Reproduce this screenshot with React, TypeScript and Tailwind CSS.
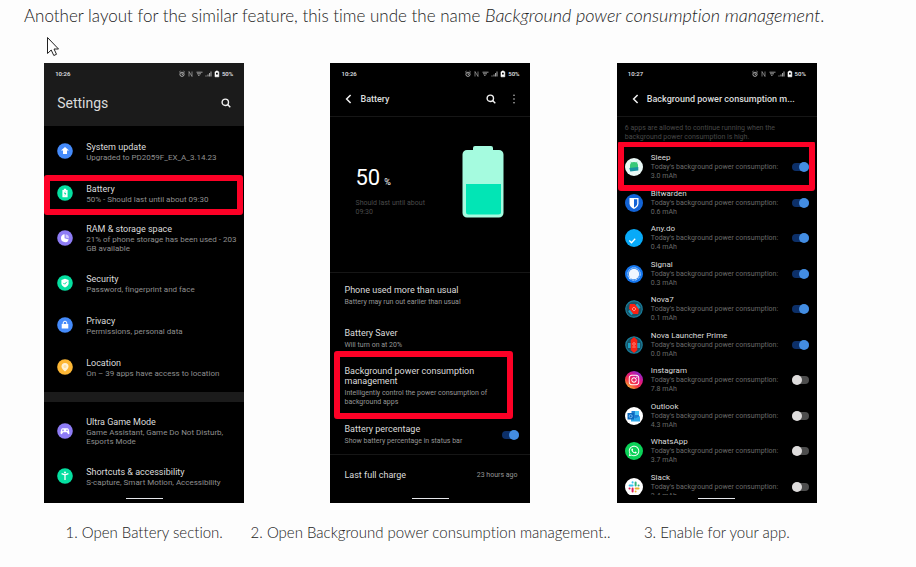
import { ReactNode } from "react";
import { FaInstagram, FaWhatsapp } from "react-icons/fa";

function StatusBar({ time }: { time: string }) {
  return (
    <div className="flex h-[22px] shrink-0 items-center justify-between px-[11px] text-[6px] font-medium text-gray-200">
      <span>{time}</span>
      <span className="flex items-center">
        <svg width="44" height="8" viewBox="0 0 44 8" fill="none" stroke="#cfcfcf">
          {/* alarm */}
          <circle cx="4" cy="4.3" r="2.1" strokeWidth="0.8" />
          <path d="M1.2 2.2l1.3-1.1M6.8 2.2L5.5 1.1M4 3v1.4h1" strokeWidth="0.7" />
          {/* nfc */}
          <path d="M11 6.5v-5l3 5v-5" strokeWidth="0.7" opacity="0.8" />
          {/* wifi */}
          <path d="M18.5 2.2h6M19 3.8h4M20 5.3h1.6" strokeWidth="0.9" opacity="0.8" />
          {/* signal */}
          <path d="M28 6.5v-1M30 6.5v-2M31.6 6.5V3M33 6.5v-5" strokeWidth="1" opacity="0.85" />
          {/* battery */}
          <path d="M37 1.8h1v-0.8h1.8v0.8h1v5h-3.8z" fill="#fff" stroke="#fff" strokeWidth="0.6" />
          <path d="M38 3.6h1.8" stroke="#111" strokeWidth="1.6" />
        </svg>
        <span>50%</span>
      </span>
    </div>
  );
}

function SearchIcon() {
  return (
    <svg width="10" height="10" viewBox="0 0 10 10" fill="none" stroke="#f1f1f1" strokeWidth="1.4">
      <circle cx="4.3" cy="4.3" r="3.2" />
      <path d="M6.6 6.6l2.7 2.7" />
    </svg>
  );
}

function BackIcon() {
  return (
    <svg width="7" height="10" viewBox="0 0 7 10" fill="none" stroke="#f1f1f1" strokeWidth="1.5">
      <path d="M5.6 1L1.6 5l4 4" />
    </svg>
  );
}

function HomeLine() {
  return (
    <div className="flex h-2 shrink-0 items-start justify-center pt-[3px]">
      <div className="h-px w-[37px] bg-gray-200" />
    </div>
  );
}

function Phone({ children }: { children: ReactNode }) {
  return (
    <div className="flex aspect-[5/11] w-[200px] flex-col overflow-hidden bg-black font-[Roboto,sans-serif] text-[9px] leading-[10px] font-normal text-[#dcdcdc]">
      {children}
    </div>
  );
}

function Toggle({ id, on }: { id: string; on: boolean }) {
  return (
    <input
      id={id}
      type="checkbox"
      role="switch"
      defaultChecked={on}
      className="flex h-2 w-[17px] shrink-0 appearance-none items-center rounded-full bg-[#4d4d4d] before:size-[10px] before:rounded-full before:bg-[#dedcdc] checked:justify-end checked:bg-[#0c2f68] checked:before:bg-[#438de2]"
    />
  );
}

type Setting = {
  title: string;
  sub: string;
  color: string;
  icon: ReactNode;
  marked?: boolean;
};

const settings: Setting[] = [
  {
    title: "System update",
    sub: "Upgraded to PD2059F_EX_A_3.14.23",
    color: "#458bfb",
    icon: <path d="M8 4L12 7.6H10V11H6V7.6H4z" fill="#fff" />,
  },
  {
    title: "Battery",
    sub: "50% - Should last until about 09:30",
    color: "#05dfa0",
    marked: true,
    icon: (
      <>
        <path d="M5.4 5h1.4V3.8h2.4V5h1.4v7.2H5.4z" fill="#fff" />
        <path d="M8.4 6L6.9 8.8h1.1L7.7 11l1.6-2.9H8.1z" fill="#05dfa0" />
      </>
    ),
  },
  {
    title: "RAM & storage space",
    sub: "21% of phone storage has been used - 203 GB available",
    color: "#8e7cf5",
    icon: (
      <>
        <path d="M7.6 4.2a4 4 0 1 0 4.2 5.2L7.6 8.2z" fill="#fff" />
        <path d="M8.6 4.2v3.2l3.3 1A3.9 3.9 0 0 0 8.6 4.2z" fill="#cfc7ff" />
      </>
    ),
  },
  {
    title: "Security",
    sub: "Password, fingerprint and face",
    color: "#05dfa0",
    icon: (
      <>
        <path d="M8 3.8l3.6 1.2v3.2c0 2-1.5 3.4-3.6 4.2-2.1-.8-3.6-2.2-3.6-4.2V5z" fill="#fff" />
        <path d="M6.3 7.9l1.3 1.3 2.2-2.4" fill="none" stroke="#05dfa0" />
      </>
    ),
  },
  {
    title: "Privacy",
    sub: "Permissions, personal data",
    color: "#458bfb",
    icon: (
      <>
        <path d="M4.7 7h6.6v4.5H4.7z" fill="#fff" />
        <path d="M6.2 7V6a1.8 1.8 0 0 1 3.6 0v1" fill="none" stroke="#fff" />
      </>
    ),
  },
  {
    title: "Location",
    sub: "On – 39 apps have access to location",
    color: "#fdb735",
    icon: (
      <>
        <path
          d="M8 12.5C6 10.7 4.5 9.3 4.5 7.4a3.5 3.5 0 0 1 7 0c0 1.9-1.5 3.3-3.5 5.1z"
          fill="#fff"
          opacity="0.8"
        />
        <circle cx="8" cy="7.4" r="1.5" fill="#fee0a0" />
      </>
    ),
  },
];

const moreSettings: Setting[] = [
  {
    title: "Ultra Game Mode",
    sub: "Game Assistant, Game Do Not Disturb, Esports Mode",
    color: "#8e7cf5",
    icon: (
      <>
        <path
          d="M5.5 5.2h5c1.2 0 2 3.2 1.9 5-.1 1.3-1.2 1.2-1.9 0l-.6-.9H6.1l-.6.9c-.7 1.2-1.8 1.3-1.9 0-.1-1.8.7-5 1.9-5z"
          fill="#fff"
        />
        <path d="M5 7.3h2M6 6.3v2" stroke="#8e7cf5" strokeWidth="0.7" />
        <circle cx="10" cy="7.3" r="0.8" fill="#8e7cf5" />
      </>
    ),
  },
  {
    title: "Shortcuts & accessibility",
    sub: "S-capture, Smart Motion, Accessibility",
    color: "#05dfa0",
    icon: (
      <>
        <circle cx="8" cy="4.6" r="1" fill="#fff" />
        <path d="M4.6 5.7l2.6 1h1.6l2.6-1M8 6.7v5.3" fill="none" stroke="#fff" strokeWidth="1.3" />
      </>
    ),
  },
];

function SettingRow({ item }: { item: Setting }) {
  return (
    <button className="relative flex min-h-[42px] w-full items-center gap-[13px] py-[9px] pr-1 pl-[13px] text-left">
      <svg className="shrink-0" width="16" height="16" viewBox="0 0 16 16">
        <circle cx="8" cy="8" r="7.8" fill={item.color} />
        {item.icon}
      </svg>
      <span>
        <span className="block leading-3">{item.title}</span>
        <span className="block text-[8px] leading-[9px] text-[#8f8f8f]">{item.sub}</span>
      </span>
      {item.marked && (
        <span className="absolute top-[3px] right-px -bottom-px left-0 rounded-[3px] border-6 border-[#fd0126]" />
      )}
    </button>
  );
}

function SettingsScreen() {
  return (
    <Phone>
      <div className="h-[63px] shrink-0 bg-[#1b1b1b]">
        <StatusBar time="10:26" />
        <div className="flex items-center justify-between px-[13px] pt-2">
          <h2 className="text-[14px] leading-5">Settings</h2>
          <button aria-label="Search">
            <SearchIcon />
          </button>
        </div>
      </div>
      <div className="shrink-0 pt-1 pb-1">
        {settings.map((item) => (
          <SettingRow key={item.title} item={item} />
        ))}
      </div>
      <div className="h-[10px] shrink-0 bg-[#1b1b1b]" />
      <div className="min-h-0 flex-1 pt-[5px]">
        {moreSettings.map((item) => (
          <SettingRow key={item.title} item={item} />
        ))}
      </div>
      <HomeLine />
    </Phone>
  );
}

function TopBar({ title, children }: { title: string; children?: ReactNode }) {
  return (
    <div className="flex h-8 shrink-0 items-center border-b border-[#161616] pr-[14px] pl-[15px] pb-[3px]">
      <button aria-label="Back" className="mr-2">
        <BackIcon />
      </button>
      <h2 className="flex-1 font-medium whitespace-nowrap">{title}</h2>
      {children}
    </div>
  );
}

function BatteryRow({ title, sub }: { title: string; sub: string }) {
  return (
    <>
      <span className="block">{title}</span>
      <span className="mt-[3px] block text-[7px] leading-[9px] text-[#969696]">{sub}</span>
    </>
  );
}

function BatteryScreen() {
  return (
    <Phone>
      <StatusBar time="10:26" />
      <TopBar title="Battery">
        <button aria-label="Search" className="mr-4">
          <SearchIcon />
        </button>
        <button aria-label="More">
          <svg width="4" height="10" viewBox="0 0 4 10" fill="#c4c4c4">
            <circle cx="2" cy="1.3" r="0.8" />
            <circle cx="2" cy="5" r="0.8" />
            <circle cx="2" cy="8.7" r="0.8" />
          </svg>
        </button>
      </TopBar>
      <div className="flex h-[156px] shrink-0 items-start justify-between border-b border-[#161616] pt-7 pr-[26px] pl-[25px]">
        <div className="w-20 pt-5">
          <p className="flex items-baseline gap-1 text-[22px] leading-[26px] text-white">
            50 <span className="text-[9px]">%</span>
          </p>
          <p className="mt-1 text-[7px] leading-[9px] text-[#4a4a4a]">Should last until about 09:30</p>
        </div>
        <svg width="42" height="73" viewBox="0 0 42 73">
          <path
            d="M11 3a2 2 0 0 1 2-2h16a2 2 0 0 1 2 2v2h6a4.5 4.5 0 0 1 4.5 4.5V68a4.5 4.5 0 0 1-4.5 4.5H5A4.5 4.5 0 0 1 .5 68V9.5A4.5 4.5 0 0 1 5 5h6z"
            fill="#a5fbdf"
          />
          <path d="M4 39h35v28a2.5 2.5 0 0 1-2.5 2.5h-30A2.5 2.5 0 0 1 4 67z" fill="#02e5b5" />
        </svg>
      </div>
      <div className="shrink-0 pt-1">
        <button className="mb-[5px] block w-full px-[14px] py-2 text-left">
          <BatteryRow title="Phone used more than usual" sub="Battery may run out earlier than usual" />
        </button>
        <button className="block w-full px-[14px] py-2 text-left">
          <BatteryRow title="Battery Saver" sub="Will turn on at 20%" />
        </button>
        <button className="relative block w-full py-2 pr-[26px] pl-[14px] text-left">
          <BatteryRow
            title="Background power consumption management"
            sub="Intelligently control the power consumption of background apps"
          />
          <span className="absolute -top-[7px] right-[17px] -bottom-1 left-1 rounded-[3px] border-6 border-[#fd0126]" />
        </button>
        <div className="flex items-center justify-between pt-[9px] pr-[11px] pb-2 pl-[14px]">
          <label htmlFor="percentage">
            <BatteryRow title="Battery percentage" sub="Show battery percentage in status bar" />
          </label>
          <Toggle id="percentage" on />
        </div>
      </div>
      <div className="flex min-h-0 flex-1 items-center justify-between border-t border-[#161616] pr-[13px] pl-[14px]">
        <span>Last full charge</span>
        <span className="text-[7px] text-[#969696]">23 hours ago</span>
      </div>
      <HomeLine />
    </Phone>
  );
}

const novaRing = (
  <>
    <circle cx="9" cy="9" r="8.2" fill="#175468" stroke="#1a7d9b" strokeWidth="1.2" />
    <path d="M3 7h3.5v5H3zM11.5 7H15v5h-3.5z" fill="#1ba0c4" />
  </>
);

const apps = [
  {
    name: "Sleep",
    usage: "3.0 mAh",
    on: true,
    marked: true,
    icon: (
      <>
        <circle cx="9" cy="9" r="9" fill="#e9f8f5" />
        <path d="M5 10V7.5a4 3.5 0 0 1 8 0V10z" fill="#37c978" />
        <path d="M5.8 3.8l1 1.5M12.2 3.8l-1 1.5" stroke="#37c978" strokeWidth="0.8" />
        <path d="M4.3 10l9-1v3.5l-8 1z" fill="#1694a0" />
      </>
    ),
  },
  {
    name: "Bitwarden",
    usage: "0.6 mAh",
    on: true,
    icon: (
      <>
        <circle cx="9" cy="9" r="9" fill="#1263d6" />
        <path d="M4.5 4h9v5.5c0 2.5-2 4.2-4.5 5.5-2.5-1.3-4.5-3-4.5-5.5z" fill="#fff" />
        <path d="M9 5.3h3.2v4.2c0 1.7-1.3 3-3.2 4z" fill="#1263d6" />
      </>
    ),
  },
  {
    name: "Any.do",
    usage: "0.4 mAh",
    on: true,
    icon: (
      <>
        <circle cx="9" cy="9" r="9" fill="#08aaf8" />
        <path d="M4.3 11.5l2.2 2.2 3.7-3.9" fill="none" stroke="#fff" strokeWidth="1.3" />
      </>
    ),
  },
  {
    name: "Signal",
    usage: "0.3 mAh",
    on: true,
    icon: (
      <>
        <circle cx="9" cy="9" r="9" fill="#1476ef" />
        <circle cx="9" cy="9" r="6.2" fill="none" stroke="#fff" strokeWidth="0.7" strokeDasharray="2.5 0.7" />
        <circle cx="9" cy="9" r="5.2" fill="#f1f6ff" />
        <path d="M4 14l.8-3 2.2 2.2z" fill="#f1f6ff" />
      </>
    ),
  },
  {
    name: "Nova7",
    usage: "0.1 mAh",
    on: true,
    icon: (
      <g transform="rotate(-40 9 9)">
        {novaRing}
        <path d="M9 2.5l3.7 3.2v6.6L9 15.5l-3.7-3.2V5.7z" fill="#fa2113" />
        <circle cx="9" cy="9" r="1.6" fill="none" stroke="#ffa294" strokeWidth="0.8" />
      </g>
    ),
  },
  {
    name: "Nova Launcher Prime",
    usage: "0.0 mAh",
    on: true,
    icon: (
      <>
        {novaRing}
        <path d="M9 1l3.3 3v10L9 17l-3.3-3V4z" fill="#fa2113" />
        <circle cx="9" cy="8" r="1.3" fill="none" stroke="#ffa294" strokeWidth="0.7" />
        <path d="M7.3 11h3.4" stroke="#ffa294" strokeWidth="0.8" />
      </>
    ),
  },
  {
    name: "Instagram",
    usage: "7.8 mAh",
    on: false,
    icon: (
      <>
        <defs>
          <linearGradient id="insta" x1="0" y1="1" x2="0.7" y2="0">
            <stop offset="0.1" stopColor="#fec53c" />
            <stop offset="0.4" stopColor="#f4383f" />
            <stop offset="0.7" stopColor="#dc1687" />
            <stop offset="1" stopColor="#8a28d0" />
          </linearGradient>
        </defs>
        <circle cx="9" cy="9" r="9" fill="url(#insta)" />
        <FaInstagram x="3" y="3" size="12" color="#fff" />
      </>
    ),
  },
  {
    name: "Outlook",
    usage: "4.3 mAh",
    on: false,
    icon: (
      <>
        <circle cx="9" cy="9" r="9" fill="#fff" />
        <path d="M6.5 4H14v8H6.5z" fill="#1d7fd3" />
        <path d="M10 4h4v4h-4z" fill="#4ac4f4" />
        <path d="M6 9l4.5 2.5L15 9v5.5H6z" fill="#2ea8ea" />
        <path d="M2.5 6H9v6.5H2.5z" fill="#0c68bd" />
        <circle cx="5.7" cy="9.2" r="1.5" fill="none" stroke="#7cc0f5" strokeWidth="0.9" />
      </>
    ),
  },
  {
    name: "WhatsApp",
    usage: "3.7 mAh",
    on: false,
    icon: (
      <>
        <circle cx="9" cy="9" r="9" fill="#0bd258" />
        <FaWhatsapp x="3" y="3" size="12" color="#fff" />
      </>
    ),
  },
  {
    name: "Slack",
    usage: "3.4 mAh",
    on: false,
    icon: (
      <>
        <circle cx="9" cy="9" r="9" fill="#fff" />
        <g fill="none" strokeWidth="2" strokeLinecap="round">
          <path d="M7.6 4.3v.1M4.6 7.4h3" stroke="#36c5f0" />
          <path d="M10.6 4.6v2.8M13.5 7.4h.1" stroke="#2eb67d" />
          <path d="M10.6 10.5h3M10.6 13.5v.1" stroke="#ecb22e" />
          <path d="M4.5 10.5h.1M7.6 10.5v3" stroke="#e01e5a" />
        </g>
      </>
    ),
  },
];

function AppsScreen() {
  return (
    <Phone>
      <StatusBar time="10:27" />
      <TopBar title="Background power consumption m..." />
      <p className="shrink-0 px-2 pt-[7px] text-[7px] leading-[9px] text-[#484848]">
        6 apps are allowed to continue running when the background power consumption is high.
      </p>
      <div className="min-h-0 flex-1 overflow-hidden pt-[11px]">
        <ul className="flex h-[calc(100%+6px)] flex-col justify-between">
          {apps.map((app) => (
            <li key={app.name} className="relative flex items-center gap-2 px-2">
              <svg className="shrink-0" width="18" height="18" viewBox="0 0 18 18">
                {app.icon}
              </svg>
              <label htmlFor={app.name} className="flex-1">
                <span className="block text-[8px] leading-[10px]">{app.name}</span>
                <span className="block text-[7px] leading-[9px] whitespace-nowrap text-[#6a6a6a]">
                  Today's background power consumption:
                  <br />
                  {app.usage}
                </span>
              </label>
              <Toggle id={app.name} on={app.on} />
              {app.marked && (
                <span className="absolute -top-3 right-[2px] -bottom-[10px] left-px z-10 rounded-[3px] border-6 border-[#fd0126]" />
              )}
            </li>
          ))}
        </ul>
      </div>
      <HomeLine />
    </Phone>
  );
}

const steps = [
  { caption: "1. Open Battery section.", screen: <SettingsScreen /> },
  { caption: "2. Open Background power consumption management..", screen: <BatteryScreen /> },
  { caption: "3. Enable for your app.", screen: <AppsScreen /> },
];

export default function App() {
  return (
    <main className="relative min-h-screen bg-[#fdfdfd] font-[Lato,sans-serif] font-light text-[#222] [font-variant-ligatures:none]">
      <p className="px-6 pt-[3px] text-[17px] leading-6 whitespace-nowrap">
        Another layout for the similar feature, this time unde the name{" "}
        <em className="text-[18px]">Background power consumption management</em>.
      </p>
      <div className="ml-px grid max-w-[859px] grid-cols-3 pt-[35px]">
        {steps.map((step) => (
          <figure key={step.caption} className="flex flex-col items-center">
            {step.screen}
            <figcaption className="pt-[19px] text-[15px] leading-5 whitespace-nowrap">{step.caption}</figcaption>
          </figure>
        ))}
      </div>
      {/* mouse pointer */}
      <svg className="absolute top-9 left-[46px]" width="14" height="21" viewBox="0 0 14 21">
        <path d="M1.5 1.5v16l3.7-3.5 2.6 5.5 2.7-1.2L8 13h4.5z" fill="#fff" stroke="#222" />
      </svg>
    </main>
  );
}
